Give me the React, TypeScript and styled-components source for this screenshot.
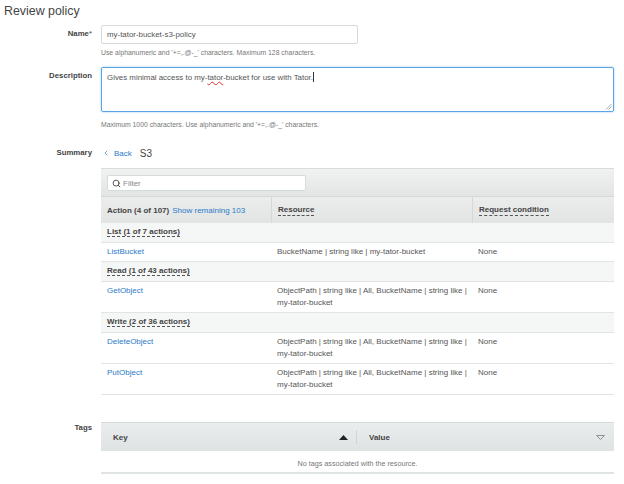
import * as React from 'react'
import styled, {createGlobalStyle} from 'styled-components'
import {Search, ChevronLeft} from 'lucide-react'

const Global = createGlobalStyle`
  html, body {
    margin: 0;
    padding: 0;
    background: #fff;
    font-family: "Liberation Sans", Arial, sans-serif;
    color: #444;
  }
  * { box-sizing: border-box; }
`

const Page = styled.div`
  width: 624px;
  height: 484px;
  overflow: hidden;
  padding: 3px 10px 0 4px;
`

const Title = styled.h1`
  margin: 0;
  font-size: 12.4px;
  line-height: 16px;
  font-weight: 400;
  color: #444;
`

const Field = styled.div<{$top: number}>`
  display: grid;
  grid-template-columns: 88px 513px;
  column-gap: 9px;
  margin-top: ${props => props.$top}px;
`

const Label = styled.div<{$pt?: number}>`
  font-size: 7.8px;
  line-height: 10px;
  font-weight: 700;
  text-align: right;
  color: #444;
  padding-top: ${props => props.$pt ?? 0}px;
`

const Star = styled.span`
  font-weight: 400;
`

const NameInput = styled.div`
  width: 257px;
  height: 19px;
  border: 1px solid #d5dbdb;
  border-radius: 2px;
  padding: 0 5px;
  font-size: 7.9px;
  line-height: 17px;
  color: #555;
`

const DescInput = styled.div`
  position: relative;
  height: 45px;
  border: 1px solid #5ba4e6;
  box-shadow: 0 0 2px #8dbff0;
  border-radius: 2px;
  padding: 4px 5px;
  font-size: 7.9px;
  line-height: 10px;
  color: #555;
`

const Squiggle = styled.span`
  text-decoration: underline wavy #d8333a;
  text-decoration-thickness: 0.6px;
  text-underline-offset: 1px;
`

const Caret = styled.span`
  display: inline-block;
  width: 1px;
  height: 10px;
  background: #333;
  vertical-align: -2px;
`

const Grip = styled.svg`
  position: absolute;
  right: 1px;
  bottom: 1px;
`

const Help = styled.p<{$top: number}>`
  margin: ${props => props.$top}px 0 0;
  font-size: 6.85px;
  line-height: 8px;
  color: #777;
`

const BackRow = styled.div`
  display: flex;
  align-items: center;
  height: 12px;
  margin-top: -1px;
  margin-bottom: 9px;
  font-size: 8px;
`

const BackLink = styled.a`
  display: flex;
  align-items: center;
  gap: 4px;
  color: #2a7bc8;
  margin: 0 8px 0 1px;
`

const ServiceName = styled.span`
  font-size: 10px;
  color: #444;
`

const FilterBar = styled.div`
  height: 29px;
  padding: 6px;
  background: linear-gradient(#f0f1f1, #e3e5e5);
  border-top: 1px solid #d9dcdc;
  border-bottom: 1px solid #d5d8d8;
`

const FilterBox = styled.div`
  display: flex;
  align-items: center;
  gap: 2px;
  width: 199px;
  height: 16px;
  padding-left: 4px;
  background: #fff;
  border: 1px solid #d5dbdb;
  border-radius: 2px;
  font-size: 8px;
  color: #888;
`

const Columns = styled.div`
  display: grid;
  grid-template-columns: 170px 201px 1fr;
`

const HeadRow = styled(Columns)`
  height: 26px;
  background: linear-gradient(#ececec, #e2e4e4);
`

const HeadCell = styled.div`
  display: flex;
  align-items: center;
  gap: 3px;
  padding-left: 6px;
  font-size: 8px;
  font-weight: 700;
  color: #444;
  border-left: 1px solid #d5d8d8;
  white-space: nowrap;
  &:first-child { border-left: 0; }
`

const Dashed = styled.span`
  border-bottom: 1px dashed #555;
  line-height: 10px;
`

const HeadLink = styled.a`
  font-weight: 400;
  color: #2a7bc8;
`

const GroupRow = styled.div`
  height: 20px;
  padding: 4px 6px 0;
  background: #f5f6f6;
  border-bottom: 1px solid #e1e4e4;
  font-size: 8px;
  font-weight: 700;
  color: #444;
`

const ActionRow = styled(Columns)<{$h: number}>`
  height: ${props => props.$h}px;
  border-bottom: 1px solid #e1e4e4;
  padding-top: 3px;
  font-size: 8px;
  line-height: 12px;
  color: #555;
`

const Cell = styled.div`
  padding-left: 6px;
`

const ActionName = styled.a`
  padding-left: 6px;
  color: #2a7bc8;
`

const TagsHead = styled.div`
  display: grid;
  grid-template-columns: 255px 1fr;
  height: 29px;
  align-items: center;
  background: linear-gradient(#e9eded, #dfe3e3);
  border-top: 1px solid #d5dada;
  font-size: 8px;
  font-weight: 700;
  color: #444;
`

const TagsCell = styled.div`
  display: flex;
  align-items: center;
  justify-content: space-between;
  height: 14px;
  padding: 0 8px 0 12px;
  & + & { border-left: 1px solid #cfd4d4; padding-right: 9px; }
`

const Empty = styled.div`
  height: 23px;
  text-align: center;
  font-size: 7.2px;
  line-height: 25px;
  color: #777;
  border-bottom: 2px solid #e1e4e4;
`

const groups = [
  {
    title: 'List (1 of 7 actions)',
    rows: [{name: 'ListBucket', res: ['BucketName | string like | my-tator-bucket']}],
  },
  {
    title: 'Read (1 of 43 actions)',
    rows: [{name: 'GetObject', res: ['ObjectPath | string like | All, BucketName | string like |', 'my-tator-bucket']}],
  },
  {
    title: 'Write (2 of 36 actions)',
    rows: [
      {name: 'DeleteObject', res: ['ObjectPath | string like | All, BucketName | string like |', 'my-tator-bucket']},
      {name: 'PutObject', res: ['ObjectPath | string like | All, BucketName | string like |', 'my-tator-bucket']},
    ],
  },
]

export default function App() {
  return (
    <Page>
      <Global />
      <Title>Review policy</Title>

      <Field $top={6}>
        <Label $pt={4}>Name<Star>*</Star></Label>
        <div>
          <NameInput>my-tator-bucket-s3-policy</NameInput>
          <Help $top={5}>Use alphanumeric and '+=,.@-_' characters. Maximum 128 characters.</Help>
        </div>
      </Field>

      <Field $top={10}>
        <Label $pt={4}>Description</Label>
        <div>
          <DescInput>
            Gives minimal access to my-<Squiggle>tator</Squiggle>-bucket for use with Tator.<Caret />
            <Grip width="7" height="7" viewBox="0 0 7 7">
              <path d="M1 6.5 6.5 1M3.5 6.5 6.5 3.5" stroke="#888" strokeWidth="0.7" />
            </Grip>
          </DescInput>
          <Help $top={9}>Maximum 1000 characters. Use alphanumeric and '+=,.@-_' characters.</Help>
        </div>
      </Field>

      <Field $top={19}>
        <Label>Summary</Label>
        <div>
          <BackRow>
            <BackLink><ChevronLeft size={8} strokeWidth={2} />Back</BackLink>
            <ServiceName>S3</ServiceName>
          </BackRow>
          <FilterBar>
            <FilterBox><Search size={9} color="#444" strokeWidth={2.4} />Filter</FilterBox>
          </FilterBar>
          <HeadRow>
            <HeadCell>Action (4 of 107) <HeadLink>Show remaining 103</HeadLink></HeadCell>
            <HeadCell><Dashed>Resource</Dashed></HeadCell>
            <HeadCell><Dashed>Request condition</Dashed></HeadCell>
          </HeadRow>
          {groups.map(group => (
            <React.Fragment key={group.title}>
              <GroupRow><Dashed>{group.title}</Dashed></GroupRow>
              {group.rows.map(row => (
                <ActionRow key={row.name} $h={row.res.length > 1 ? 31 : 19}>
                  <ActionName>{row.name}</ActionName>
                  <Cell>{row.res.map(line => <div key={line}>{line}</div>)}</Cell>
                  <Cell>None</Cell>
                </ActionRow>
              ))}
            </React.Fragment>
          ))}
        </div>
      </Field>

      <Field $top={27}>
        <Label $pt={1}>Tags</Label>
        <div>
          <TagsHead>
            <TagsCell>
              Key
              <svg width="9" height="5" viewBox="0 0 9 5"><path d="M0 5 4.5 0 9 5Z" fill="#222" /></svg>
            </TagsCell>
            <TagsCell>
              Value
              <svg width="9" height="5" viewBox="0 0 9 5"><path d="M.5.5h8L4.5 4.5Z" fill="none" stroke="#8a9494" /></svg>
            </TagsCell>
          </TagsHead>
          <Empty>No tags associated with the resource.</Empty>
        </div>
      </Field>
    </Page>
  )
}
